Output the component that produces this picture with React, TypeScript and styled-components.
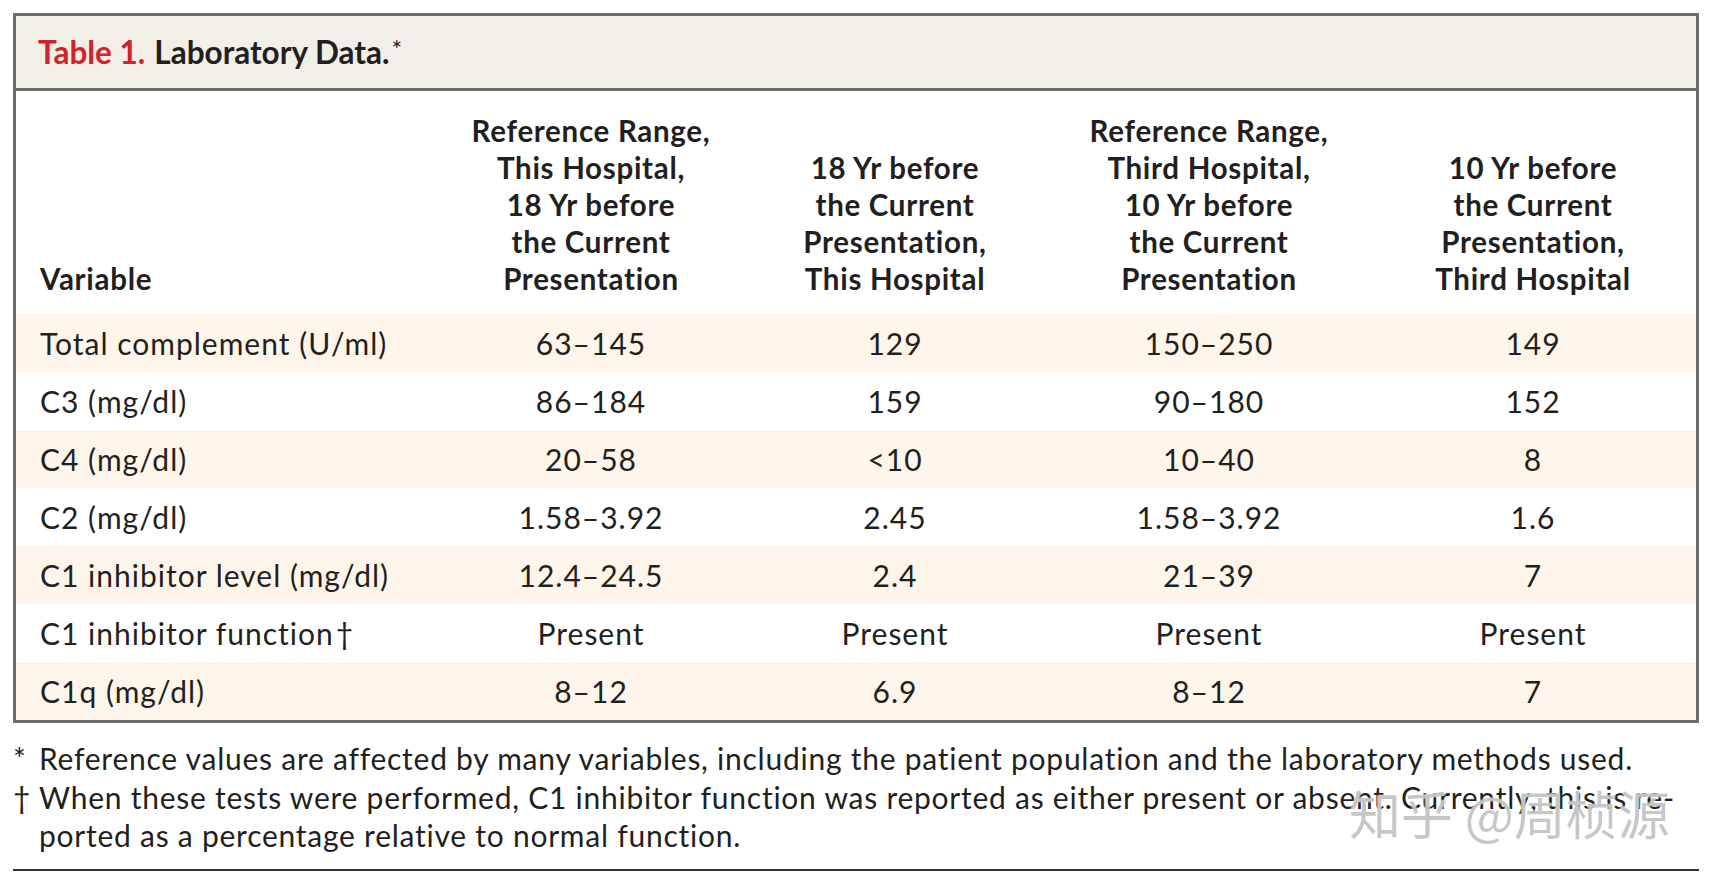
import React from 'react';
import styled, {createGlobalStyle} from 'styled-components';

const FONT = `Lato, "Open Sans", "Liberation Sans", sans-serif`;
const COLUMNS = '424px 302px 306px 322px 326px';

const GlobalStyle = createGlobalStyle`
  html, body {
    margin: 0;
    padding: 0;
    background: #ffffff;
  }
  body {
    font-family: ${FONT};
    color: #231f20;
  }
`;

type RowData = {
    label: string,
    dagger?: boolean,
    values: string[],
}

const HEADERS = [
    ['Reference Range,', 'This Hospital,', '18 Yr before', 'the Current', 'Presentation'],
    ['18 Yr before', 'the Current', 'Presentation,', 'This Hospital'],
    ['Reference Range,', 'Third Hospital,', '10 Yr before', 'the Current', 'Presentation'],
    ['10 Yr before', 'the Current', 'Presentation,', 'Third Hospital'],
];

const ROWS: RowData[] = [
    {label: 'Total complement (U/ml)', values: ['63–145', '129', '150–250', '149']},
    {label: 'C3 (mg/dl)', values: ['86–184', '159', '90–180', '152']},
    {label: 'C4 (mg/dl)', values: ['20–58', '<10', '10–40', '8']},
    {label: 'C2 (mg/dl)', values: ['1.58–3.92', '2.45', '1.58–3.92', '1.6']},
    {label: 'C1 inhibitor level (mg/dl)', values: ['12.4–24.5', '2.4', '21–39', '7']},
    {label: 'C1 inhibitor function', dagger: true, values: ['Present', 'Present', 'Present', 'Present']},
    {label: 'C1q (mg/dl)', values: ['8–12', '6.9', '8–12', '7']},
];

export default function App() {
    return (
        <Page>
            <GlobalStyle/>
            <TableBox>
                <TitleBar>
                    <TitleNumber>Table 1.</TitleNumber>
                    <TitleText>Laboratory Data.<TitleStar>*</TitleStar></TitleText>
                </TitleBar>
                <HeaderRow>
                    <HeaderCell $first>Variable</HeaderCell>
                    {HEADERS.map((lines, i) => (
                        <HeaderCell key={i}>
                            {lines.map((line, j) => <div key={j}>{line}</div>)}
                        </HeaderCell>
                    ))}
                </HeaderRow>
                {ROWS.map((row, i) => (
                    <DataRow key={i} $shaded={i % 2 === 0}>
                        <Cell $first>
                            {row.label}
                            {row.dagger && <Dagger>†</Dagger>}
                        </Cell>
                        {row.values.map((value, j) => <Cell key={j}>{value}</Cell>)}
                    </DataRow>
                ))}
            </TableBox>
            <Notes>
                <Note>
                    <Mark>*</Mark>
                    <NoteText>
                        Reference values are affected by many variables, including the patient population and the
                        laboratory methods used.
                    </NoteText>
                </Note>
                <Note>
                    <Mark>†</Mark>
                    <NoteText>
                        When these tests were performed, C1 inhibitor function was reported as either present or
                        absent. Currently, this is re-<br/>ported as a percentage relative to normal function.
                    </NoteText>
                </Note>
                <Watermark>知乎 @周桢源</Watermark>
            </Notes>
            <BottomRule/>
        </Page>
    );
}

const Page = styled.div`
  width: 1686px;
  padding: 13px 0 0 13px;
`;

const TableBox = styled.div`
  box-sizing: border-box;
  width: 1686px;
  border: 3px solid #6d6d6d;
`;

const TitleBar = styled.div`
  height: 72px;
  display: flex;
  align-items: center;
  gap: 9px;
  padding-left: 22px;
  background: #f2eee8;
  border-bottom: 3px solid #6d6d6d;
  font-size: 31.5px;
  font-weight: 700;
`;

const TitleNumber = styled.span`
  color: #d2232a;
`;

const TitleText = styled.span`
  color: #231f20;
`;

const TitleStar = styled.span`
  font-size: 25px;
  font-weight: 400;
  vertical-align: 5px;
  margin-left: 2px;
`;

const HeaderRow = styled.div`
  display: grid;
  grid-template-columns: ${COLUMNS};
  height: 223px;
  align-items: end;
`;

const HeaderCell = styled.div<{ $first?: boolean }>`
  padding: ${({$first}) => $first ? '0 0 17px 24px' : '0 0 17px 0'};
  text-align: ${({$first}) => $first ? 'left' : 'center'};
  font-size: 29.5px;
  font-weight: 700;
  line-height: 37px;
  letter-spacing: 0.7px;
  color: #231f20;
`;

const DataRow = styled.div<{ $shaded: boolean }>`
  display: grid;
  grid-template-columns: ${COLUMNS};
  height: 58px;
  background: ${({$shaded}) => $shaded ? '#fdf5ea' : '#ffffff'};
`;

const Cell = styled.div<{ $first?: boolean }>`
  display: flex;
  align-items: center;
  justify-content: ${({$first}) => $first ? 'flex-start' : 'center'};
  padding-left: ${({$first}) => $first ? '24px' : '0'};
  font-size: 30px;
  letter-spacing: 1px;
  color: #231f20;
`;

const Dagger = styled.span`
  margin-left: 2px;
`;

const Notes = styled.div`
  position: relative;
  padding: 16px 0 14px;
`;

const Note = styled.div`
  display: grid;
  grid-template-columns: 26px 1fr;
  font-size: 30px;
  line-height: 38.5px;
  letter-spacing: 0.75px;
  color: #231f20;
`;

const Mark = styled.span`
  line-height: 38.5px;
`;

const NoteText = styled.span``;

const Watermark = styled.div`
  position: absolute;
  left: 1336px;
  top: 52px;
  font-family: "Noto Sans CJK SC", sans-serif;
  font-size: 52px;
  color: rgba(175, 175, 175, 0.7);
  text-shadow: 0 0 2px #ffffff;
  white-space: nowrap;
`;

const BottomRule = styled.div`
  width: 1686px;
  border-top: 2px solid #333333;
`;
